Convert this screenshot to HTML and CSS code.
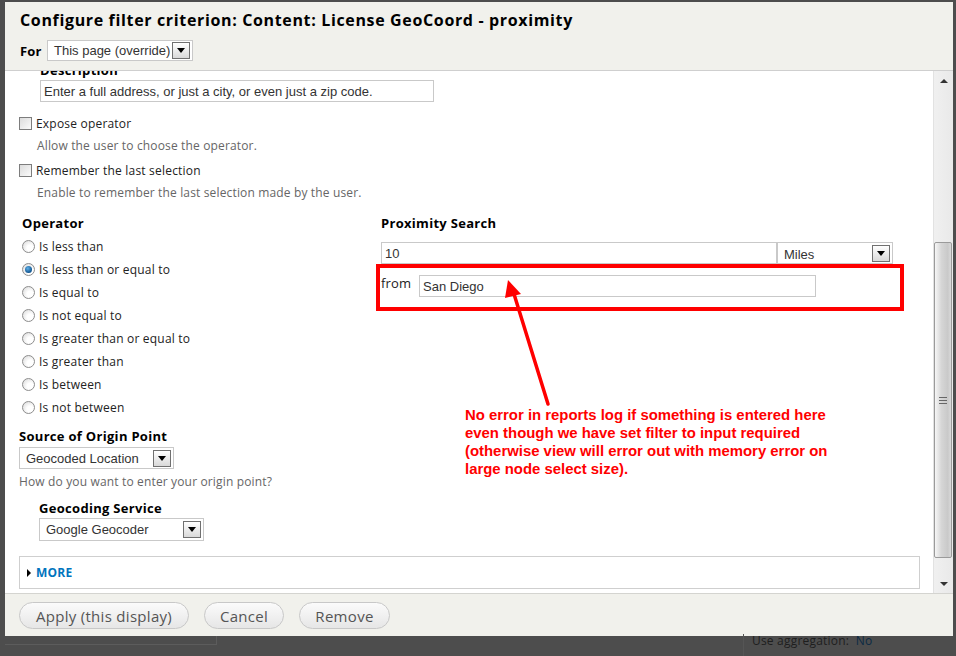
FILE: index.html
```html
<!DOCTYPE html>
<html>
<head>
<meta charset="utf-8">
<title>Configure filter criterion</title>
<link rel="stylesheet" href="styles.css">
</head>
<body>
<div class="page">
  <div class="dialog">
    <div class="titlebar">
      <h1 class="title">Configure filter criterion: Content: License GeoCoord - proximity</h1>
      <div class="for-row">
        <span class="for-label">For</span>
        <div class="select select-for"><span class="select-text">This page (override)</span><span class="select-btn"></span></div>
      </div>
    </div>

    <div class="body">
      <div class="content">
        <div class="desc-block">
          <div class="label clipped">Description</div>
          <div class="textbox desc-input">Enter a full address, or just a city, or even just a zip code.</div>
        </div>

        <div class="check-row first"><span class="checkbox"></span><span>Expose operator</span></div>
        <div class="help">Allow the user to choose the operator.</div>
        <div class="check-row"><span class="checkbox"></span><span>Remember the last selection</span></div>
        <div class="help">Enable to remember the last selection made by the user.</div>

        <div class="columns">
          <div class="col-left">
            <div class="operator">
              <div class="label">Operator</div>
              <div class="radio-row"><span class="radio"></span>Is less than</div>
              <div class="radio-row"><span class="radio checked"></span>Is less than or equal to</div>
              <div class="radio-row"><span class="radio"></span>Is equal to</div>
              <div class="radio-row"><span class="radio"></span>Is not equal to</div>
              <div class="radio-row"><span class="radio"></span>Is greater than or equal to</div>
              <div class="radio-row"><span class="radio"></span>Is greater than</div>
              <div class="radio-row"><span class="radio"></span>Is between</div>
              <div class="radio-row"><span class="radio"></span>Is not between</div>
            </div>

            <div class="label source-label">Source of Origin Point</div>
            <div class="select select-source"><span class="select-text">Geocoded Location</span><span class="select-btn"></span></div>
            <div class="help origin-help">How do you want to enter your origin point?</div>

            <div class="geocoding">
              <div class="label">Geocoding Service</div>
              <div class="select select-geo"><span class="select-text">Google Geocoder</span><span class="select-btn"></span></div>
            </div>
          </div>

          <div class="col-right">
            <div class="label">Proximity Search</div>
            <div class="distance-row">
              <div class="textbox distance-input">10</div>
              <div class="select select-units"><span class="select-text units-text">Miles</span><span class="select-btn"></span></div>
            </div>
            <div class="from-row">
              <span class="from-label">from</span>
              <div class="textbox from-input">San Diego</div>
            </div>
          </div>
        </div>

        <div class="more-box">
          <span class="more-arrow"></span><a class="more-link">MORE</a>
        </div>
      </div>

      <div class="vscroll">
        <div class="vs-btn"><span class="vs-up"></span></div>
        <div class="vs-track">
          <div class="vs-thumb"><span class="grip"></span></div>
        </div>
        <div class="vs-btn"><span class="vs-down"></span></div>
      </div>
    </div>

    <div class="footer">
      <button class="btn btn-apply">Apply (this display)</button>
      <button class="btn btn-cancel">Cancel</button>
      <button class="btn btn-remove">Remove</button>
    </div>
  </div>

  <div class="underlay">
    <div class="under-left"></div>
    <div class="under-right">Use aggregation:&nbsp; <span class="under-value">No</span></div>
  </div>

  <!-- red callout drawn over the form -->
  <div class="callout-box"></div>
  <svg class="callout-arrow" width="956" height="656" viewBox="0 0 956 656">
    <line x1="548" y1="404" x2="514" y2="294" stroke="#ff0000" stroke-width="3.5" stroke-linecap="round"/>
    <polygon points="508,280 505,298 521,294" fill="#ff0000"/>
  </svg>
  <div class="callout-text">No error in reports log if something is entered here<br>even though we have set filter to input required<br>(otherwise view will error out with memory error on<br>large node select size).</div>
</div>
</body>
</html>
```

FILE: styles.css
```css
* { box-sizing: border-box; }

html, body {
  margin: 0;
  padding: 0;
}

body {
  background: #4d4d4d;
  font-family: "Open Sans", "DejaVu Sans", sans-serif;
  font-size: 12px;
  letter-spacing: 0.2px;
  color: #222;
  width: 956px;
  height: 656px;
  overflow: hidden;
}

.page {
  position: relative;
  width: 956px;
  height: 656px;
  padding-top: 2px;
}

.dialog {
  margin-left: 5px;
  width: 948px;
  height: 634px;
  display: flex;
  flex-direction: column;
  background: #f1f1ec;
}

/* ---------- title bar ---------- */
.titlebar {
  height: 69px;
  padding: 6px 0 0 15px;
  border-bottom: 1px solid #cfcfcf;
}

.title {
  margin: 0;
  font-size: 16px;
  font-weight: 700;
  line-height: 24px;
  color: #000;
  letter-spacing: 0.65px;
}

.for-row {
  display: flex;
  align-items: center;
  margin-top: 8px;
}

.for-label {
  font-weight: 700;
  font-size: 13px;
  color: #000;
  width: 27px;
}

/* ---------- fake selects and text boxes ---------- */
.select {
  display: flex;
  align-items: center;
  justify-content: space-between;
  height: 22px;
  background: #fff;
  border: 1px solid #c9c9c9;
  font-family: "Liberation Sans", Arial, sans-serif;
  font-size: 13px;
  letter-spacing: 0;
  color: #333;
}

.select-text { padding-left: 6px; white-space: nowrap; }

.select-btn {
  position: relative;
  width: 18px;
  height: 17px;
  margin-right: 2px;
  border: 1px solid #707070;
  background: linear-gradient(#ffffff, #d9d9d9);
  flex: none;
}

.select-btn::after {
  content: "";
  position: absolute;
  left: 4px;
  top: 5px;
  border-left: 4px solid transparent;
  border-right: 4px solid transparent;
  border-top: 5px solid #000;
}

.select-for { width: 146px; height: 21px; }

.textbox {
  height: 22px;
  border: 1px solid #c9c9c9;
  background: #fff;
  font-family: "Liberation Sans", Arial, sans-serif;
  font-size: 13px;
  letter-spacing: 0;
  color: #333;
  padding: 2px 3px 0;
  line-height: 17px;
  white-space: nowrap;
}

/* ---------- scrolling body ---------- */
.body {
  display: flex;
  height: 522px;
  background: #fff;
}

.content {
  flex: 1;
  overflow: hidden;
  padding: 0 0 0 14px;
}

.label {
  font-weight: 700;
  font-size: 13px;
  letter-spacing: 0.3px;
  color: #000;
  line-height: 16px;
}

.desc-block { padding-left: 21px; }

.clipped { margin-top: -9px; }

.desc-input {
  margin-top: 2px;
  width: 394px;
}

.check-row {
  display: flex;
  align-items: center;
  height: 18px;
  margin-top: 7px;
  color: #222;
}

.check-row.first { margin-top: 12px; }

.check-row + .help { margin-top: 6px; }

.checkbox {
  width: 13px;
  height: 13px;
  border: 1px solid #7d7d7d;
  background: linear-gradient(135deg, #dcdcdc, #fbfbfb);
  margin-right: 4px;
}

.help {
  color: #666;
  font-size: 12px;
  letter-spacing: 0.15px;
  line-height: 16px;
  padding-left: 18px;
}

/* ---------- two columns ---------- */
.columns {
  display: flex;
  margin-top: 14px;
}

.col-left { width: 362px; }

.operator { padding-left: 3px; }

.operator .label { margin-bottom: 4px; }

.radio-row {
  display: flex;
  align-items: center;
  height: 23px;
  color: #222;
}

.radio {
  width: 13px;
  height: 13px;
  border-radius: 50%;
  border: 1px solid #8d8d8d;
  background: radial-gradient(circle at 65% 65%, #ffffff 30%, #d6d6d6 100%);
  margin-right: 4px;
  position: relative;
}

.radio.checked::after {
  content: "";
  position: absolute;
  left: 2px;
  top: 2px;
  width: 7px;
  height: 7px;
  border-radius: 50%;
  background: radial-gradient(circle at 40% 35%, #5fb0e8, #0c4f8a 75%);
}

.source-label { margin-top: 9px; }

.select-source { width: 155px; margin-top: 3px; }

.origin-help { padding-left: 0; margin-top: 5px; letter-spacing: 0.15px; }

.geocoding { padding-left: 20px; margin-top: 10px; }

.select-geo { width: 165px; height: 23px; margin-top: 2px; }

.col-right { padding-left: 0; }

.distance-row {
  display: flex;
  margin-top: 11px;
}

.distance-input { width: 396px; }

.select-units { width: 116px; }

.units-text { padding-top: 2px; }

.from-row {
  display: flex;
  align-items: flex-start;
  margin-top: 11px;
}

.from-label {
  width: 38px;
  font-size: 13px;
  color: #222;
  line-height: 16px;
}

.from-input { width: 397px; }

/* ---------- MORE fieldset ---------- */
.more-box {
  display: flex;
  align-items: center;
  margin-top: 15px;
  width: 901px;
  height: 33px;
  border: 1px solid #cfcfcf;
  padding-left: 7px;
}

.more-arrow {
  width: 0;
  height: 0;
  border-top: 4px solid transparent;
  border-bottom: 4px solid transparent;
  border-left: 4px solid #000;
  margin-right: 5px;
}

.more-link {
  color: #0074bd;
  font-weight: 700;
  font-size: 12px;
}

/* ---------- scrollbar ---------- */
.vscroll {
  width: 20px;
  display: flex;
  flex-direction: column;
  background: linear-gradient(90deg, #f0f0f0, #e9e9e9);
  border-left: 1px solid #e2e2e2;
}

.vs-btn {
  height: 19px;
  display: flex;
  align-items: center;
  justify-content: center;
}

.vs-up {
  border-left: 4px solid transparent;
  border-right: 4px solid transparent;
  border-bottom: 4px solid #333;
}

.vs-down {
  border-left: 4px solid transparent;
  border-right: 4px solid transparent;
  border-top: 4px solid #333;
}

.vs-track {
  flex: 1;
  padding-top: 152px;
}

.vs-thumb {
  height: 316px;
  margin: 0 1px 0 0;
  border: 1px solid #9a9a9a;
  border-radius: 2px;
  background: linear-gradient(90deg, #f6f6f6, #d6d6d6 40%, #c9c9c9 80%, #dadada);
  display: flex;
  align-items: center;
  justify-content: center;
}

.grip {
  width: 8px;
  height: 7px;
  border-top: 1px solid #666;
  border-bottom: 1px solid #666;
  position: relative;
}

.grip::after {
  content: "";
  position: absolute;
  left: 0;
  right: 0;
  top: 2px;
  border-top: 1px solid #666;
}

/* ---------- footer buttons ---------- */
.footer {
  height: 43px;
  border-top: 1px solid #d4d4d0;
  display: flex;
  align-items: center;
  padding-left: 14px;
  gap: 15px;
}

.btn {
  height: 27px;
  border: 1px solid #c8c8c8;
  border-radius: 14px;
  background: linear-gradient(#fbfbfb, #e6e6e6);
  font-family: "Open Sans", "DejaVu Sans", sans-serif;
  font-size: 15px;
  letter-spacing: 0.3px;
  color: #555;
  padding: 0;
  margin-top: 1px;
}

.btn-apply { width: 170px; }
.btn-cancel { width: 80px; }
.btn-remove { width: 91px; }

/* ---------- page behind the dialog ---------- */
.underlay {
  display: flex;
  height: 20px;
}

.under-left {
  width: 212px;
  height: 9px;
  margin-left: 5px;
  border-right: 1px solid #5c5c5c;
  border-bottom: 1px solid #5c5c5c;
}

.under-right {
  margin-left: 526px;
  padding: 0 0 0 8px;
  margin-top: -2px;
  line-height: 14px;
  border-left: 1px solid #555;
  font-size: 12px;
  letter-spacing: 0.2px;
  color: #1e1e1e;
  white-space: nowrap;
}

.under-value { color: #0b2a44; }

/* ---------- red callout ---------- */
.callout-box {
  position: absolute;
  left: 376px;
  top: 264px;
  width: 528px;
  height: 47px;
  border: 4px solid #ff0000;
}

.callout-arrow {
  position: absolute;
  left: 0;
  top: 0;
  pointer-events: none;
}

.callout-text {
  position: absolute;
  left: 465px;
  top: 406px;
  font-family: "Liberation Sans", Arial, sans-serif;
  font-weight: 700;
  font-size: 14.9px;
  letter-spacing: 0;
  line-height: 18px;
  color: #ff0000;
  white-space: nowrap;
}
```
